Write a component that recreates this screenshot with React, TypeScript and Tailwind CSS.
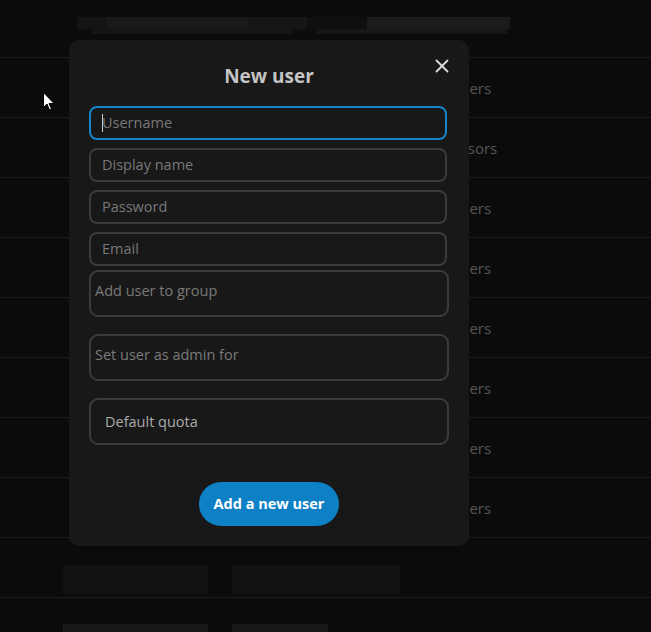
import React from 'react';

const rows = [
  { label: 'Teachers' },
  { label: 'Professors' },
  { label: 'Teachers' },
  { label: 'Teachers' },
  { label: 'Teachers' },
  { label: 'Teachers' },
  { label: 'Teachers' },
  { label: 'Teachers' },
];

function Field({ label, focused }: { label: string; focused?: boolean }) {
  return (
    <div
      className={`flex h-[34px] w-[358px] items-center rounded-lg border-2 pl-[11px] text-[14.5px] text-[#777] ${
        focused ? 'border-[#1783c9]' : 'border-[#3b3b3b]'
      }`}
    >
      {focused && <span className="mr-[-1px] h-[18px] w-px bg-[#d0d0d0]" />}
      {label}
    </div>
  );
}

function BigField({ label }: { label: string }) {
  return (
    <div className="h-[47px] w-[360px] rounded-[9px] border-2 border-[#3b3b3b] pl-[4px] pt-[8px] text-[14.5px] leading-[22px] text-[#7a7a7a]">
      {label}
    </div>
  );
}

export default function App() {
  return (
    <div
      className="relative h-[632px] w-[651px] overflow-hidden bg-[#0b0b0b]"
      style={{ fontFamily: '"Open Sans", "Noto Sans", sans-serif' }}
    >
      {/* tabela de fundo */}
      <div className="flex h-[58px] items-start border-b border-[#1b1b1b] pt-[17px]">
        <div className="ml-[77px] flex h-[17px] w-[433px] flex-col">
          <div className="flex h-[12px]">
            <div className="w-[30px] bg-[#141414]" />
            <div className="w-[140px] bg-[#1a1a1a]" />
            <div className="w-[60px] bg-[#161616]" />
            <div className="w-[60px] bg-[#0f0f0f]" />
            <div className="w-[143px] bg-[#1b1b1b]" />
          </div>
          <div className="flex h-[5px]">
            <div className="ml-[15px] w-[200px] bg-[#151515]" />
            <div className="w-[25px] bg-[#0d0d0d]" />
            <div className="w-[190px] bg-[#171717]" />
          </div>
        </div>
      </div>
      {rows.map((r, i) => (
        <div key={i} className="flex h-[60px] items-center border-b border-[#1b1b1b] pt-[2px]">
          <span className={`text-[15px] text-[#565656] ${r.label === 'Professors' ? 'ml-[423px]' : 'ml-[428px]'}`}>
            {r.label}
          </span>
        </div>
      ))}
      <div className="flex h-[60px] items-end gap-[24px] border-b border-[#1b1b1b] pb-[3px] pl-[63px]">
        <div className="h-[29px] w-[145px] bg-[#111111]" />
        <div className="h-[29px] w-[168px] bg-[#111111]" />
      </div>
      <div className="flex gap-[24px] pl-[63px] pt-[26px]">
        <div className="h-[10px] w-[145px] bg-[#181818]" />
        <div className="h-[10px] w-[96px] bg-[#181818]" />
      </div>

      {/* modal */}
      <div className="absolute left-[69px] top-[40px] flex h-[506px] w-[400px] flex-col items-start rounded-[10px] bg-[#181818] px-5 pt-[22px]">
        <button className="absolute right-[20px] top-[19px] text-[#dcdcdc]">
          <svg width="14" height="14" viewBox="0 0 14 14" fill="none" stroke="currentColor" strokeWidth="1.8" strokeLinecap="round">
            <path d="M1.5 1.5l11 11M12.5 1.5l-11 11" />
          </svg>
        </button>
        <h2 className="w-[360px] text-center text-[19px] font-bold leading-[28px] text-[#c4c4c4]">New user</h2>
        <div className="mt-[16px] flex flex-col gap-2">
          <Field label="Username" focused />
          <Field label="Display name" />
          <Field label="Password" />
          <Field label="Email" />
        </div>
        <div className="mt-1">
          <BigField label="Add user to group" />
        </div>
        <div className="mt-[17px]">
          <BigField label="Set user as admin for" />
        </div>
        <div className="mt-[17px] flex h-[47px] w-[360px] items-center rounded-[9px] border-2 border-[#3b3b3b] pl-[14px] text-[14.5px] text-[#ababab]">
          Default quota
        </div>
        <div className="mt-[37px] flex w-[360px] justify-center">
          <button className="h-[44px] w-[140px] rounded-full bg-[#0e80c5] text-[14.5px] font-bold text-white">
            Add a new user
          </button>
        </div>
      </div>

      {/* ponteiro do mouse */}
      <svg className="absolute left-[43px] top-[92px]" width="12" height="19" viewBox="0 0 12 19">
        <path d="M0.5 0.5v15l3.5-3.5 2.5 6 2-1-2.5-5.5h5z" fill="#fff" stroke="#000" strokeWidth="1" />
      </svg>
    </div>
  );
}
